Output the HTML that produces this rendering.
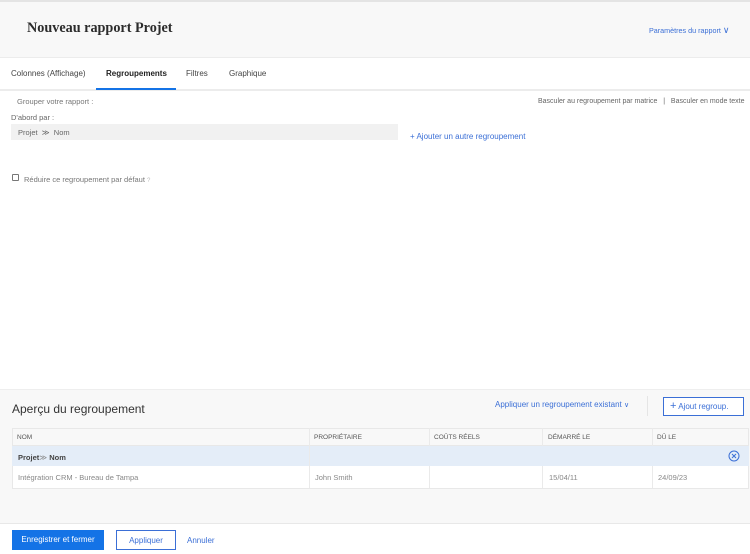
<!DOCTYPE html><html><head><style>
*{box-sizing:border-box;margin:0;padding:0}
body{width:750px;height:554px;position:relative;font-family:"Liberation Sans",sans-serif;background:#fff;color:#555;overflow:hidden}
.a{position:absolute;white-space:nowrap}
.blue{color:#3b6fd6}
</style></head><body>
<div class="a" style="left:0;top:0;width:750px;height:2px;background:#e4e4e4"></div>
<div class="a" style="left:0;top:2px;width:750px;height:56px;background:#f8f8f8;border-bottom:1px solid #ececec"></div>
<div class="a" style="left:27px;top:20px;font-family:'Liberation Serif',serif;font-weight:bold;font-size:14.2px;color:#2c2c2c">Nouveau rapport Projet</div>
<div class="a blue" style="left:649px;top:25px;font-size:7.2px">Paramètres du rapport <span style="font-size:9px">∨</span></div>
<div class="a" style="left:0;top:89px;width:750px;height:2px;background:#ececec"></div>
<div class="a" style="left:11px;top:69px;font-size:8px;color:#444">Colonnes (Affichage)</div>
<div class="a" style="left:106px;top:69px;font-size:8px;color:#222;font-weight:bold">Regroupements</div>
<div class="a" style="left:186px;top:69px;font-size:8px;color:#444">Filtres</div>
<div class="a" style="left:229px;top:69px;font-size:8px;color:#444">Graphique</div>
<div class="a" style="left:96px;top:88px;width:80px;height:2px;background:#1473e6"></div>
<div class="a" style="left:17px;top:97px;font-size:7.5px;color:#777">Grouper votre rapport :</div>
<div class="a" style="left:538px;top:98px;font-size:7px;color:#666">Basculer au regroupement par matrice &nbsp;&nbsp;|&nbsp;&nbsp; Basculer en mode texte</div>
<div class="a" style="left:11px;top:113px;font-size:7.5px;color:#666">D'abord par :</div>
<div class="a" style="left:11px;top:124px;width:387px;height:16px;background:#f1f1f1"></div>
<div class="a" style="left:18px;top:128px;font-size:7.5px;color:#666">Projet &nbsp;≫&nbsp; Nom</div>
<div class="a blue" style="left:410px;top:132px;font-size:8px">+ Ajouter un autre regroupement</div>
<div class="a" style="left:12px;top:174px;width:7px;height:7px;border:1px solid #777;border-radius:1px"></div>
<div class="a" style="left:24px;top:175px;font-size:7.5px;color:#777">Réduire ce regroupement par défaut <span style="color:#bbb;font-size:6px">?</span></div>
<div class="a" style="left:0;top:389px;width:750px;height:134px;background:#f8f8f8;border-top:1px solid #eee"></div>
<div class="a" style="left:12px;top:402px;font-size:12px;color:#333">Aperçu du regroupement</div>
<div class="a blue" style="left:495px;top:400px;font-size:8px">Appliquer un regroupement existant <span style="font-size:7px">∨</span></div>
<div class="a" style="left:647px;top:396px;width:1px;height:20px;background:#e5e5e5"></div>
<div class="a blue" style="left:663px;top:397px;width:81px;height:19px;border:1px solid #3b6fd6;background:#fff;font-size:8px;line-height:17px;padding-left:6px"><span style="font-size:11px">+</span> Ajout regroup.</div>
<div class="a" style="left:12px;top:428px;width:737px;height:61px;border:1px solid #e8e8e8;background:#fff"></div>
<div class="a" style="left:12px;top:428px;width:737px;height:18px;background:#f8f8f8;border:1px solid #e8e8e8"></div>
<div class="a" style="left:12px;top:446px;width:737px;height:20px;background:#e4edf8"></div>
<div class="a" style="left:309px;top:428px;width:1px;height:60px;background:#eaeaea"></div>
<div class="a" style="left:429px;top:428px;width:1px;height:18px;background:#eaeaea"></div>
<div class="a" style="left:429px;top:466px;width:1px;height:22px;background:#eaeaea"></div>
<div class="a" style="left:542px;top:428px;width:1px;height:18px;background:#eaeaea"></div>
<div class="a" style="left:542px;top:466px;width:1px;height:22px;background:#eaeaea"></div>
<div class="a" style="left:652px;top:428px;width:1px;height:18px;background:#eaeaea"></div>
<div class="a" style="left:652px;top:466px;width:1px;height:22px;background:#eaeaea"></div>
<div class="a" style="left:17px;top:434px;font-size:6.5px;color:#555">NOM</div>
<div class="a" style="left:314px;top:434px;font-size:6.5px;color:#555">PROPRIÉTAIRE</div>
<div class="a" style="left:434px;top:434px;font-size:6.5px;color:#555">COÛTS RÉELS</div>
<div class="a" style="left:548px;top:434px;font-size:6.5px;color:#555">DÉMARRÉ LE</div>
<div class="a" style="left:657px;top:434px;font-size:6.5px;color:#555">DÛ LE</div>
<div class="a" style="left:18px;top:453px;font-size:7.5px;color:#444;font-weight:bold">Projet<span style="font-weight:normal;color:#888">≫</span> Nom</div>
<svg class="a" style="left:728px;top:450px" width="12" height="12" viewBox="0 0 12 12"><circle cx="6" cy="6" r="5" fill="none" stroke="#3b6fd6" stroke-width="1"/><path d="M4 4L8 8M8 4L4 8" stroke="#3b6fd6" stroke-width="1"/></svg>
<div class="a" style="left:18px;top:473px;font-size:7.5px;color:#888">Intégration CRM - Bureau de Tampa</div>
<div class="a" style="left:315px;top:473px;font-size:7.5px;color:#888">John Smith</div>
<div class="a" style="left:549px;top:473px;font-size:7.5px;color:#888">15/04/11</div>
<div class="a" style="left:658px;top:473px;font-size:7.5px;color:#888">24/09/23</div>
<div class="a" style="left:0;top:523px;width:750px;height:1px;background:#e8e8e8"></div>
<div class="a" style="left:12px;top:530px;width:92px;height:20px;background:#1473e6;color:#fff;font-size:8px;text-align:center;line-height:20px">Enregistrer et fermer</div>
<div class="a blue" style="left:116px;top:530px;width:60px;height:20px;border:1px solid #3b6fd6;font-size:8px;text-align:center;line-height:20px">Appliquer</div>
<div class="a blue" style="left:187px;top:536px;font-size:8px">Annuler</div>
</body></html>
